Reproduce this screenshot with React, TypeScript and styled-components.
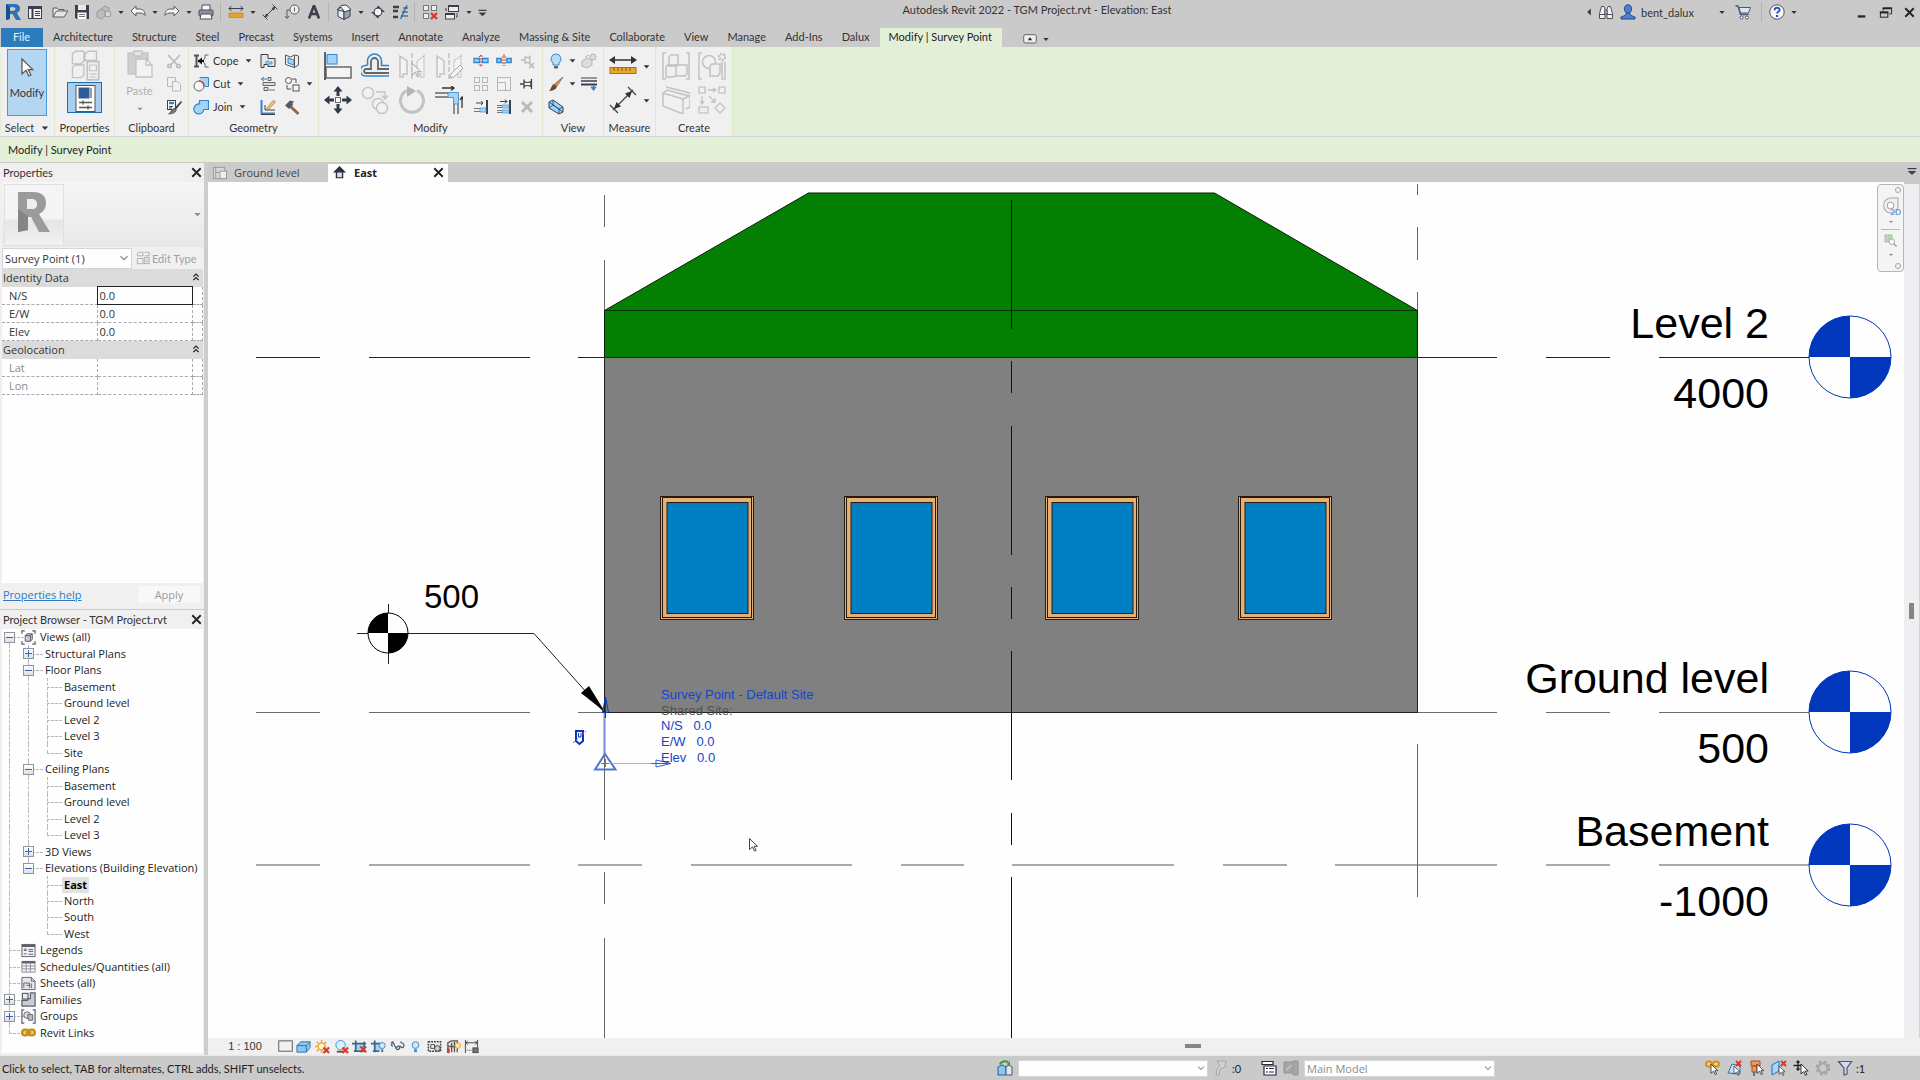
import React from "react";
import styled, { createGlobalStyle, css } from "styled-components";

const UI = '"Lato", "Open Sans", "Noto Sans", sans-serif';
const LIST = '"Open Sans", "Noto Sans", sans-serif';
const DRAW = '"Liberation Sans", Arial, sans-serif';
const INK = "#3b3f4c";
const DIM = "#c2c2c2";
const BLUE = "#2f86cf";
const SKY = "#a3d3f5";
const RED = "#d8392b";
const MARK = "#0037bc";

const Global = createGlobalStyle`
  * { box-sizing: border-box; }
  html, body, #root { height: 100%; }
  body { margin: 0; background: #cacaca; font-family: ${UI}; font-size: 11px; color: #333; overflow: hidden; }
  button, input, select { font: inherit; color: inherit; margin: 0; padding: 0; border: 0; background: none; border-radius: 0; }
`;

/* ---------- icons ---------- */

const CURSOR = "M0 0v11l3-2.6 2 4.2 1.6-.8-2-4H8z";

const icons16: Record<string, React.ReactNode> = {
  revit: (
    <>
      <path d="M1 0h8c4.500 0 6 2 6 4.500 0 2.300-1.300 3.700-3.200 4.300L16 16h-5L7.500 10H5v5l-4 1z" fill="#2c72b5" />
      <path d="M5 3.200v3.600h3c1.600 0 2.400-.6 2.400-1.800S9.600 3.200 8 3.200z" fill="#cfcfcf" />
      <path d="M1 0l4 3.200V15l-4 1z" fill="#17528f" />
    </>
  ),
  list: (
    <g fill="none" stroke={INK}>
      <rect x="1.500" y="2.500" width="13" height="12" fill="#f2f2f2" />
      <path d="M1.500 4h13M5.500 5v9" strokeWidth="2" />
      <path d="M8 7.500h5M8 9.500h5M8 11.500h5" />
    </g>
  ),
  open: (
    <g fill="#e6e6e6" stroke="#5a5e69">
      <path d="M1 13V4h4l1.500 1.500H12V7" />
      <path d="M1 13l3.500-6H16l-4 6z" />
    </g>
  ),
  save: (
    <>
      <path d="M1 1h14v14H2.500L1 13.500z" fill={INK} />
      <path d="M4 1h8v5H4z" fill="#e8e8e8" />
      <path d="M3.500 8.500h9V15h-9z" fill="#fff" />
      <path d="M5 10.500h6M5 12.500h6" stroke="#777" />
    </>
  ),
  sync: (
    <g fill="#bdbdbd" stroke="#999">
      <path d="M5 5l4-3 4 2v5l-4 3-4-2z" />
      <path d="M1 8l4-3 4 2v5l-4 3-4-2z" />
      <circle cx="12" cy="10" r="3" fill="#d5d5d5" />
    </g>
  ),
  undo: <path d="M1 7l5-5v3h3c4 0 6 2 6 6.500-1.500-2-3-2.500-6-2.500H6v3z" fill="#f4f4f4" stroke="#555a66" />,
  redo: <path d="M15 7l-5-5v3H7c-4 0-6 2-6 6.500 1.500-2 3-2.500 6-2.500h3v3z" fill="#f4f4f4" stroke="#555a66" />,
  print: (
    <g stroke="#4a4e5a" fill="#f7f7f7">
      <path d="M4 6V1h8v5" />
      <rect x="1" y="6" width="14" height="6" rx="1" fill="#8d919c" />
      <path d="M3 10h10l1 5H2z" />
    </g>
  ),
  measure: (
    <>
      <path d="M1 4.500h14M3.500 2L1 4.500 3.500 7M12.500 2L15 4.500 12.500 7" stroke={INK} fill="none" />
      <rect x="1" y="9" width="14" height="4.500" fill="#e8a32b" stroke="#b57a15" strokeWidth=".6" />
    </>
  ),
  dim: (
    <g stroke={INK} fill={INK}>
      <path d="M3 13L13 3M.5 10.500l5 5M10.500.5l5 5" />
      <path d="M2.500 13.500l4-1.500L4 9.500zM13.500 2.500l-4 1.500L12 6.500z" stroke="none" />
    </g>
  ),
  tag: (
    <g fill="none" stroke="#565a66">
      <circle cx="10.500" cy="5.500" r="4.500" fill="#f0f0f0" />
      <path d="M10.500 3.500v4M6 6H3v8M1 12l2 2.500L5 12" />
    </g>
  ),
  textA: (
    <path d="M8 1.500L3 14.500M8 1.500l5 13M4.800 10h6.400" stroke={INK} strokeWidth="2.600" fill="none" />
  ),
  house: (
    <g stroke={INK} fill="#e9edf2">
      <path d="M2 6v6.500l6 3v-8z" />
      <path d="M8 7.500v8l6-3V5.500z" fill="#9aa3b2" />
      <path d="M1 6l4-4.500 5-.5 5 4.500-6.500 2.500L5 3z" fill="#f7f7f7" />
    </g>
  ),
  section: (
    <>
      <path d="M8 1.500l7 6.500h-3l-4 6.500L1 8h3z" fill={INK} />
      <circle cx="8" cy="8" r="4" fill="#f2f2f2" stroke={INK} />
    </>
  ),
  thin: (
    <>
      <path d="M1 3h6M1 7h5M1 13h5" stroke={INK} strokeWidth="2.500" />
      <path d="M8.500 15L15 1" stroke={BLUE} strokeWidth="1.600" />
      <path d="M11 4h5M10 8h6M9 12h7" stroke={INK} />
    </>
  ),
  closeHidden: (
    <>
      <g fill="#eee" stroke="#777">
        <rect x="1.500" y="1.500" width="5" height="5" />
        <rect x="9.500" y="1.500" width="5" height="5" />
        <rect x="1.500" y="9.500" width="5" height="5" />
      </g>
      <path d="M9 9l6 6M15 9l-6 6" stroke={RED} strokeWidth="2.400" />
    </>
  ),
  switchWin: (
    <g fill="#eee" stroke={INK}>
      <rect x="4.500" y="1.500" width="10" height="6" />
      <path d="M4 2h11" strokeWidth="2" />
      <rect x="1.500" y="9.500" width="9" height="5.500" />
      <path d="M1 10h10" strokeWidth="2" />
      <path d="M13 9v4h-1M2 7V4" />
    </g>
  ),
  custom: <path d="M3 4.500h10v1.600H3zM3 8h10l-5 4.500z" fill={INK} />,
  caret: <path d="M4.500 6.500h7L8 10.500z" fill="#333" />,
  caretL: <path d="M10 4v8L6 8z" fill="#333" />,
  binoc: (
    <g fill="#f2f2f2" stroke="#4b4f5b">
      <path d="M1.500 14.500v-5l2-7h2.500l1 3v9z" />
      <path d="M14.500 14.500v-5l-2-7H10l-1 3v9z" />
      <path d="M7 6h2v4H7zM1.500 10.500H7M9 10.500h5.500" />
    </g>
  ),
  user: (
    <g fill="#4f7fd0" stroke="#27468c">
      <path d="M8 .8c2.500 0 3.600 1.700 3.600 4S10 9.500 8 9.500 4.400 7 4.400 4.800 5.500.8 8 .8z" />
      <path d="M1 15v-2c2-1 4-1 5-2.500V9h4v1.500C11 12 13 12 15 13v2z" />
    </g>
  ),
  cart: (
    <g fill="none" stroke="#4c5878">
      <path d="M.5 2H3l2.500 8.500h8" strokeWidth="1.400" />
      <path d="M4 3.500h11.500l-2 5.500H5.500z" fill="#dfe4ee" />
      <circle cx="6.500" cy="13.500" r="1.500" fill="#fff" />
      <circle cx="12" cy="13.500" r="1.500" fill="#fff" />
    </g>
  ),
  help: (
    <>
      <circle cx="8" cy="8" r="7.200" fill="#f7f7f7" stroke="#555" />
      <path d="M5.600 6.200C5.600 3 10.600 3 10.600 6c0 1.800-2.500 1.800-2.500 3.600" stroke="#2458c4" strokeWidth="2" fill="none" />
      <path d="M7 11h2.200v2H7z" fill="#2458c4" />
    </>
  ),
  min: <path d="M4 11h8v2.400H4z" fill="#222" />,
  restore: (
    <g fill="none" stroke="#222">
      <path d="M5.500 6V3.500h9v6H12" />
      <path d="M5 3.500h10" strokeWidth="2" />
      <rect x="2.500" y="7.500" width="8" height="5.500" />
      <path d="M2 8h9" strokeWidth="2" />
    </g>
  ),
  close: <path d="M3.500 3.500l9 9M12.500 3.500l-9 9" stroke="#222" strokeWidth="2" />,
  scissors: (
    <g stroke="#b9b9b9" fill="none" strokeWidth="1.600">
      <path d="M2 2l9 9.500M14 2l-9 9.500" />
      <circle cx="3.500" cy="13" r="1.700" />
      <circle cx="12.500" cy="13" r="1.700" />
    </g>
  ),
  copyDoc: (
    <g fill="#f1f1f1" stroke="#b9b9b9">
      <path d="M1.500 1.500h8v9h-8z" />
      <path d="M6.500 5.500h5l3 3v6.500h-8z" />
    </g>
  ),
  matchType: (
    <>
      <rect x="1.500" y="1.500" width="8" height="9" fill="#fff" stroke={INK} />
      <path d="M3 4h5" stroke={BLUE} strokeWidth="2.500" />
      <path d="M3 7.500h4M3 9h3" stroke={INK} />
      <path d="M15 2l1 1-5.500 7L9 8.500z" fill={INK} />
      <path d="M8.500 9l2 2c-1 3-5 4-8 4 2-1 3-5 6-6z" fill="#777" stroke={INK} strokeWidth=".6" />
    </>
  ),
  cope: (
    <>
      <path d="M1 2.500h5M1 13.500h5M3.500 2.500v11" stroke="#555" strokeWidth="2" />
      <path d="M15.500 2H12v3L9.500 8l2.500 3v3h3.500" fill="none" stroke="#666" />
      <path d="M5 8h6" stroke="#111" strokeWidth="2" />
      <path d="M4.500 8L9 4.500v7z" fill="#111" />
    </>
  ),
  cut: (
    <>
      <path d="M6.500 1.500h9v9h-4" fill={SKY} stroke={BLUE} />
      <circle cx="6" cy="10" r="5" fill="#f8f8f8" stroke="#666" />
      <path d="M6 5a5 5 0 0 1 5 5" stroke={RED} fill="none" strokeWidth="1.600" />
    </>
  ),
  join: (
    <path d="M6.500 1.500h9v9h-4.700A5 5 0 1 1 6.500 5z" fill={SKY} stroke={BLUE} strokeWidth="1.200" />
  ),
  wallJoin: (
    <>
      <path d="M1 1.500h7v4h7v8H8v-2H4v3H1z" fill="#e6e6e6" stroke={INK} />
      <path d="M5 9.500l3-2v1.500h4v2H8V12z" fill={SKY} stroke={BLUE} strokeWidth=".7" />
    </>
  ),
  splitFace: (
    <>
      <path d="M1.500 2l5 2 4-2 4 1v9l-4 2.500-9-3z" fill="#eee" stroke="#555" />
      <path d="M4 5l6 2v5l-6-2z" fill={SKY} stroke={BLUE} />
      <path d="M10.500 2.500V15" stroke="#555" />
    </>
  ),
  beamJoin: (
    <>
      <path d="M1 3h6M4 1L1.500 3 4 5M9 14h6" stroke={BLUE} fill="none" />
      <path d="M8 1.500h3v3H8zM3 6.500h12v3H3zM4 11.500h4v3H4z" fill="#ddd" stroke="#666" />
    </>
  ),
  linkJoin: (
    <g fill="#f4f4f4" stroke="#555">
      <circle cx="4.500" cy="4.500" r="3" />
      <rect x="9" y="9" width="6" height="6" />
      <path d="M8 3h4v4M3 9v4h4" fill="none" />
    </g>
  ),
  paintJoin: (
    <>
      <path d="M1.500 1v13.500H15" fill="none" stroke={BLUE} strokeWidth="2" />
      <path d="M5 6v5h10M1 15.500h14" fill="none" stroke={INK} />
      <path d="M7 9l6-7.500 2.500 1.500L9 10l-2.500 1z" fill="#f1c27a" stroke="#a8752b" strokeWidth=".7" />
    </>
  ),
  hammer: (
    <>
      <path d="M7 6.500l8 7.500-1.500 1.500L5.500 8z" fill="#a5683e" stroke="#5f3b22" strokeWidth=".6" />
      <path d="M1 6.500L6 1.500l4 1-1.500 2 .5 1.500-4 4z" fill="#565b66" />
    </>
  ),
  splitEl: (
    <>
      <path d="M1 5.500h5.500v4H1zM9.500 5.500H15v4H9.500z" fill={SKY} stroke={BLUE} strokeWidth="1.300" />
      <path d="M8 2v11M6 4l2-2 2 2M6 11.500l2 2 2-2" stroke={RED} fill="none" strokeDasharray="2 1" />
    </>
  ),
  splitGap: (
    <>
      <path d="M1 5.500h4v4H1zM11 5.500h4v4h-4z" fill={SKY} stroke={BLUE} strokeWidth="1.600" />
      <path d="M7 3v10M9 3v10M8 1v2" stroke={RED} fill="none" strokeDasharray="2 1" />
    </>
  ),
  unpin: (
    <>
      <path d="M2 7h4M6 3v8M6 4.500h5M6 9.500h5M11 2.500v9" stroke="#bbb" fill="none" strokeWidth="1.300" />
      <path d="M10 10l5 5M15 10l-5 5" stroke="#bbb" strokeWidth="1.600" />
    </>
  ),
  array: (
    <g fill="#f2f2f2" stroke="#b5b5b5">
      <rect x="1.500" y="1.500" width="5" height="5" />
      <rect x="9.500" y="1.500" width="5" height="5" />
      <rect x="1.500" y="9.500" width="5" height="5" />
      <rect x="9.500" y="9.500" width="5" height="5" />
    </g>
  ),
  scale: (
    <g fill="#f2f2f2" stroke="#b5b5b5">
      <rect x="1.500" y="1.500" width="13" height="13" />
      <rect x="1.500" y="6.500" width="8" height="8" />
    </g>
  ),
  pin: (
    <path d="M1 8h4M5 3.500v9M5 5.500c3 1.500 4 1.500 7 0v5c-3-1.500-4-1.500-7 0M12.500 3v10" stroke="#444" fill="none" strokeWidth="1.300" />
  ),
  trim1: (
    <>
      <path d="M14 1v14" stroke={INK} strokeWidth="2" />
      <path d="M3 4h7M8 2l2 2-2 2" stroke={INK} fill="none" />
      <path d="M1 9.500h6M1 12.500h6" stroke="#777" />
      <path d="M7 9h6v4H7z" fill={SKY} stroke={BLUE} strokeWidth=".6" />
    </>
  ),
  trim2: (
    <>
      <path d="M14 1v14" stroke={INK} strokeWidth="2" />
      <path d="M4 2.500h7M9 .5l2 2-2 2" stroke={INK} fill="none" />
      <path d="M1 6.500h5M1 8.500h5M1 11.500h5M1 13.500h5" stroke="#777" />
      <path d="M6 6h7v3H6zM6 11h7v3H6z" fill={SKY} stroke={BLUE} strokeWidth=".6" />
    </>
  ),
  del: <path d="M3 3l10 10M13 3L3 13" stroke="#b9b9b9" strokeWidth="3" />,
  bulb: (
    <>
      <path d="M8 1a5 5 0 0 1 3 9v2H5v-2a5 5 0 0 1 3-9z" fill="#b9dcf7" stroke="#3c87c9" />
      <path d="M6 13h4v2.500H6z" fill="#666" />
    </>
  ),
  displace: (
    <g fill="#ddd" stroke="#b5b5b5">
      <path d="M1 8l5-3 5 2v5l-5 3-5-2z" />
      <circle cx="12" cy="4" r="3" />
      <path d="M4 4l4-2" />
    </g>
  ),
  brush: (
    <>
      <path d="M15 1L9 10 6.500 8z" fill="#e0964a" stroke="#8d5522" strokeWidth=".7" />
      <path d="M6 8l3 2.500C8 14 4 15 1 15c2-1 2-6 5-7z" fill="#704b33" />
    </>
  ),
  lineWork: (
    <>
      <path d="M0 2h16" stroke={INK} />
      <path d="M0 5h16" stroke={INK} strokeWidth="1.500" />
      <path d="M0 8.500h16" stroke={INK} strokeWidth="2" />
      <path d="M12.500 9v3M10 11h5l-2.500 3.500z" fill={BLUE} stroke={BLUE} />
    </>
  ),
  box3d: (
    <>
      <path d="M1 3l4-2 10 7v5l-4 2L1 9z" fill={SKY} stroke={INK} />
      <path d="M5 1v5l10 7M5 6L1 9M1 3l10 7v5M11 10l4-2" fill="none" stroke="#1d5f9a" />
    </>
  ),
  docTab: (
    <g fill="#d9d9d9" stroke="#999">
      <rect x="1.500" y="2.500" width="12" height="12" />
      <path d="M4 2.500v12M4 8h4" />
      <rect x="8.500" y="6.500" width="7" height="8" fill="#eee" />
    </g>
  ),
  elevTab: (
    <>
      <path d="M8 1l7 7h-3v6H4V8H1z" fill="#2b3040" />
      <path d="M5.500 8h5v5h-5z" fill="#d5e0ee" />
    </>
  ),
  editType: (
    <g fill="none" stroke="#a9a9a9">
      <path d="M3 1.500h5v4H1.500V3zM10 1.500h5v4h-5M1.500 8.500H8v6H1.500z" />
      <rect x="9.500" y="7.500" width="5.500" height="7" />
      <path d="M11 10h3M11 12h3" />
    </g>
  ),
  views: (
    <g fill="none" stroke="#555a66">
      <path d="M4 1H1v3M12 1h3v3M4 15H1v-3M12 15h3v-3" strokeWidth="1.300" />
      <path d="M4.500 6l2-2h5.500v6l-2 2H4.500z" fill="#c9ccd3" />
      <path d="M4.500 6H10v6M10 6l2-2" />
    </g>
  ),
  legends: (
    <g stroke="#5c606b" fill="#f2f2f2">
      <rect x="1" y="1.500" width="14" height="13" />
      <path d="M1 3h14" strokeWidth="2.500" />
      <path d="M3 6.500h3M3 8h3M3 11.500h3M8 7h5M8 9h5M8 12h5" />
    </g>
  ),
  schedules: (
    <g stroke="#8a8e98" fill="#f8f8f8">
      <rect x="1" y="2.500" width="14" height="11.500" />
      <path d="M1 3.500h14" stroke="#5c606b" strokeWidth="2.500" />
      <path d="M1 7.500h14M1 10.500h14M5.500 4v10M10 4v10" />
    </g>
  ),
  sheets: (
    <g stroke="#5c606b" fill="#e4e6ea">
      <path d="M1 1.500h10l4 4V14.500H1z" />
      <path d="M3 12.500v-5h6v5M6 10h3M11 1.500v4h4" fill="none" />
      <path d="M11 8v5" />
    </g>
  ),
  families: (
    <g stroke="#5c606b" strokeWidth="1.300" fill="#eceef1">
      <path d="M1 9h6v-2h3V1h5v14H1z" fill="#c8ccd4" />
      <rect x="1.500" y="1.500" width="6" height="6" />
    </g>
  ),
  groups: (
    <g stroke="#5c606b" fill="none">
      <path d="M3.500 1H1v14h2.500M12.500 1H15v14h-2.500" strokeWidth="1.300" />
      <circle cx="6.500" cy="6.500" r="3.500" fill="#dfe1e6" />
      <path d="M7 6h5.500v6H8z" fill="#b9bdc6" />
    </g>
  ),
  links: (
    <g fill="#f3cf7c" stroke="#c98d1a" strokeWidth="2.400">
      <rect x="1.200" y="5" width="7" height="6" rx="3" />
      <rect x="7.800" y="5" width="7" height="6" rx="3" />
      <path d="M5 8h6" />
    </g>
  ),
  detail: <rect x=".8" y="2" width="14.400" height="11" fill="#f1f1f1" stroke="#555" />,
  visual: (
    <g fill="#8cc7f2" stroke="#2a70b4">
      <path d="M1 7l4-4h10v6l-4 5H1z" />
      <path d="M1 7h10v7M11 7l4-4" fill="none" />
    </g>
  ),
  sunOff: (
    <>
      <circle cx="7" cy="8" r="3.800" fill="#fff3cf" stroke="#e09c22" strokeWidth="1.400" />
      <path d="M7 1v2M7 13v2M0 8h2M2 3l1.500 1.500M12 3l-1.500 1.500M2 13l1.500-1.500" stroke="#e09c22" strokeWidth="1.400" />
      <path d="M9 9l6 6M15 9l-6 6" stroke={RED} strokeWidth="2.400" />
    </>
  ),
  shadowOff: (
    <>
      <circle cx="7" cy="6.500" r="5" fill="#dceffc" stroke="#4a90cc" />
      <path d="M3 13.500h7" stroke="#555" strokeWidth="2" />
      <path d="M9 9l6 6M15 9l-6 6" stroke={RED} strokeWidth="2.400" />
    </>
  ),
  cropOff: (
    <>
      <path d="M3 4h10v8H3z" fill={SKY} />
      <path d="M4 1.500V13.500M0 5h15M2 13h11V3" fill="none" stroke="#3a6690" strokeWidth="1.800" />
      <path d="M9 8l6 6M15 8l-6 6" stroke={RED} strokeWidth="2.400" />
    </>
  ),
  cropShow: (
    <>
      <path d="M3 4h8v8H3z" fill={SKY} />
      <path d="M4 1.500V14M0 5h12M2 13h7" fill="none" stroke="#3a6690" strokeWidth="1.800" />
      <circle cx="12" cy="7" r="3.200" fill="#cfe8fb" stroke="#3c87c9" />
      <path d="M12 11v3" stroke="#666" strokeWidth="2" />
    </>
  ),
  glasses: (
    <g fill="none" stroke="#4a5f73" strokeWidth="1.300">
      <path d="M1 4l2-1 4 8c2 1 4-1 3-3-1-1-3 0-3 2M9 8c2-1 3 0 3 1 2 1 4-2 2-4l-3-2M3 5c-2 0-2 2 0 3" />
    </g>
  ),
  reveal: (
    <>
      <circle cx="8" cy="6.500" r="3.600" fill="#cfe8fb" stroke="#3c87c9" />
      <path d="M6.500 11h3v3h-3z" fill="#3c87c9" />
    </>
  ),
  tempView: (
    <g fill="none" stroke="#444">
      <rect x="1.500" y="3" width="13" height="10" strokeDasharray="2 1" strokeWidth="1.600" />
      <circle cx="11" cy="10" r="3" fill="#ccc" />
      <path d="M4 6h4v4H4z" />
    </g>
  ),
  analytic: (
    <>
      <path d="M2 14V4l4-2h6v12M2 8h10M6 4v10M9 3v11" fill="none" stroke="#555" strokeWidth="1.400" />
      <path d="M1 10h3v5H1z" fill={RED} />
      <circle cx="12.500" cy="7" r="3" fill="#ffe2a6" stroke="#e09c22" />
    </>
  ),
  constraint: (
    <g fill="none" stroke="#444">
      <path d="M1.500 1v14M14.500 1v8M1.500 4h13M4 2L2 4l2 2M12 2l2 2-2 2" />
      <path d="M3 12h5" strokeDasharray="1 1" />
      <rect x="9.500" y="9.500" width="5.500" height="5" fill="#777" />
    </g>
  ),
  worksets: (
    <>
      <path d="M1 7l4-2 4 2v8H1z" fill="#8cc7f2" stroke="#2a5f94" />
      <path d="M9 15V7l3-2 3 2v8z" fill="#dfe6ee" stroke="#3b5a7a" />
      <path d="M3 4.500C4 1 9 .5 11 2.500" stroke="#3f9a3a" strokeWidth="2" fill="none" />
      <path d="M9.500 4.500L13 5V1z" fill="#3f9a3a" />
    </>
  ),
  editable: <path d="M4 1h9l-1 6-5 2-1 6H3l1-6 3-3z" fill="#d3d3d3" stroke="#a5a5a5" />,
  options: (
    <g stroke="#23283f" fill="#fff">
      <path d="M1 1.500h11v3H1zM3 6h12v9H3z" strokeWidth="1.200" />
      <path d="M5 8.500h2M8 8.500h5M5 12h2M8 12h5" />
    </g>
  ),
  optionAdd: (
    <g fill="#a6a6a6" stroke="#949494">
      <path d="M1 2h8v11H1zM10 1h5v14h-5z" />
      <path d="M3 10l6-5" stroke="#ddd" />
    </g>
  ),
  selLinks: (
    <>
      <g fill="#f3cf7c" stroke="#d09420" strokeWidth="2">
        <rect x="1" y="1.500" width="6" height="5" rx="2.500" />
        <rect x="8" y="1.500" width="6" height="5" rx="2.500" />
      </g>
      <path d={CURSOR} transform="translate(6 4) scale(.85)" fill="#fff" stroke="#333" />
    </>
  ),
  selUnder: (
    <>
      <path d="M1 13L5 4l8 2v8z" fill="#bfe0f6" stroke="#2a70b4" />
      <path d="M9 1l5 5M14 1L9 6" stroke={RED} strokeWidth="2" />
      <path d={CURSOR} transform="translate(7 6) scale(.75)" fill="#fff" stroke="#333" />
    </>
  ),
  selPinned: (
    <>
      <path d="M2 1h9v5H2zM3 6v6h5V6z" fill="#ea9a5a" stroke="#b0521c" />
      <path d="M5 12v4" stroke="#555" strokeWidth="1.500" />
      <path d={CURSOR} transform="translate(8 4) scale(.85)" fill="#fff" stroke="#333" />
    </>
  ),
  selFace: (
    <>
      <path d="M1 5l7-4v10l-7 4z" fill="#a9d6f6" stroke="#2a70b4" />
      <path d="M10 1l5 5M15 1l-5 5" stroke={RED} strokeWidth="2" />
      <path d={CURSOR} transform="translate(8 6) scale(.75)" fill="#fff" stroke="#333" />
    </>
  ),
  drag: (
    <>
      <path d="M5 1v9M.5 5.500h9M3.500 2.500L5 1l1.500 1.500M3.500 8.500L5 10l1.500-1.500" stroke="#222" fill="none" strokeWidth="1.300" />
      <path d={CURSOR} transform="translate(8 4) scale(.9)" fill="#fff" stroke="#222" />
    </>
  ),
  gear: (
    <>
      <circle cx="8" cy="8" r="6.400" fill="none" stroke="#a4a4a4" strokeWidth="2" strokeDasharray="3 2" />
      <circle cx="8" cy="8" r="4.500" fill="none" stroke="#a4a4a4" strokeWidth="2" />
    </>
  ),
  filter: <path d="M1.500 1.500h13L10 8v6l-3 1V8z" fill="#d5dbe6" stroke="#4a5878" strokeWidth="1.200" />,
  wheel: (
    <>
      <path d="M15 1v9a6.500 6.500 0 0 1-6.500 5A7 7 0 0 1 8.500 1z" fill="#f0f0f3" stroke="#a6a8b2" />
      <circle cx="8" cy="8" r="3" fill="#fff" stroke="#a6a8b2" />
    </>
  ),
  zoomRegion: (
    <>
      <rect x="1" y="1" width="9" height="9" fill="#b8d8b2" stroke="#7fa37b" strokeDasharray="1 1" />
      <circle cx="9.500" cy="9.500" r="3.500" fill="#f4f4f4" stroke="#9a9ca6" />
      <path d="M12 12l3.500 3.500" stroke="#9a9ca6" strokeWidth="1.600" />
    </>
  ),
  panelMode: (
    <>
      <rect x=".8" y="3" width="14.400" height="9.500" rx="2" fill="#eee" stroke="#555" />
      <path d="M5.500 9.500h5L8 6z" fill="#222" />
    </>
  ),
  tri: <path d="M3 5.500h10L8 11z" fill="#333" />,
  triGrey: <path d="M4 6h8l-4 4z" fill="#8a8a8a" />,
  chev: <path d="M4 6l4 4 4-4" fill="none" stroke="#8a8a8a" strokeWidth="1.400" />,
  fold: <path d="M5 6.500L8 3.500l3 3M5 10.500l3-3 3 3" fill="none" stroke="#222" strokeWidth="1.400" />,
};

const icons28: Record<string, React.ReactNode> = {
  arrow: <path d={CURSOR} transform="translate(9 5) scale(1.350)" fill="#fff" stroke="#555" strokeWidth=".9" />,
  typeProps: (
    <g fill="#f0f0f0" stroke={DIM}>
      <path d="M3 4l3-2h7v9l-3 2H3zM14 4l3-2h7v8H14zM3 16l3-2h7v9l-3 2H3z" strokeWidth="1.200" />
      <rect x="16" y="11" width="10" height="16" strokeWidth="1.500" />
      <path d="M18 14h6v5h-6zM18 22h6M18 24.500h6" />
    </g>
  ),
  props: (
    <g stroke="#555">
      <rect x="5" y="1.500" width="19" height="26" fill="#fff" />
      <path d="M7.500 3.500h11v11h-11z" fill="#2f5b96" stroke="none" />
      <path d="M20 4v10" stroke="#999" strokeWidth="2" />
      <path d="M8 18.500h13M8 23.500h13M12 16.500v4M17 21.500v4" strokeWidth="1.300" />
    </g>
  ),
  paste: (
    <g fill="#e4e4e4" stroke="#c2c2c2" strokeWidth="1.300">
      <rect x="2" y="3" width="20" height="21" fill="#cfcfcf" />
      <path d="M8 1h8v5H8z" />
      <path d="M10 9h10l6 6v12H10z" fill="#f2f2f2" />
      <path d="M20 9v6h6" fill="none" />
    </g>
  ),
  align: (
    <>
      <path d="M1 0v28" stroke="#333" strokeWidth="1.500" />
      <rect x="3" y="2.500" width="10" height="9.500" fill={SKY} stroke={BLUE} />
      <rect x="2" y="15" width="25" height="11" fill="#f4f4f4" stroke="#555" strokeWidth="1.300" />
    </>
  ),
  offset: (
    <g fill="none">
      <path d="M28 13.500h-7.500V9a7 7 0 0 0-14 0c0 3 1 4.500-2 4.500a5 5 0 0 0 0 10.500H28" stroke={BLUE} strokeWidth="1.600" />
      <path d="M28 17h-11V9.500a3.500 3.500 0 0 0-7 0V17H5a2 2 0 0 0 0 4h23" stroke="#666" strokeWidth="1.800" />
    </g>
  ),
  mirrorPick: (
    <g fill="#f4f4f4" stroke={DIM} strokeWidth="1.500">
      <path d="M2 4l7 5v13h-4v3H2z" />
      <path d="M26 4l-7 5v13h4v3h3z" strokeDasharray="2 1" />
      <path d="M14 1v26" strokeDasharray="5 2" />
      <path d={CURSOR} transform="translate(14 11) scale(1.100)" stroke="#b5b5b5" strokeWidth="1" />
    </g>
  ),
  mirrorDraw: (
    <g fill="#f4f4f4" stroke={DIM} strokeWidth="1.500">
      <path d="M2 4l7 5v13h-4v3H2z" />
      <path d="M26 4l-7 5v13h4v3h3z" strokeDasharray="2 1" />
      <path d="M14 1v26" strokeDasharray="5 2" />
      <path d="M15 26l1-4 9-9 3 3-9 9z" stroke="#aaa" strokeWidth="1" />
    </g>
  ),
  move: (
    <>
      <path d="M14 0l4.500 5.500h-3V10h-3V5.500h-3zM14 28l4.500-5.500h-3V18h-3v4.500h-3zM0 14l5.500-4.500v3H10v3H5.500v3zM28 14l-5.500-4.500v3H18v3h4.500v3z" fill="#333a4a" />
      <rect x="11.500" y="11.500" width="5" height="5" fill="#fff" stroke="#666" />
    </>
  ),
  copy: (
    <g fill="#f2f2f2" stroke={DIM} strokeWidth="1.400">
      <circle cx="7" cy="7" r="5.500" />
      <circle cx="17" cy="18" r="5.500" />
      <circle cx="21" cy="22" r="5.500" />
      <path d="M15 6h9v6M21 9.500l3 3.500 3-3.500" fill="none" />
    </g>
  ),
  rotate: (
    <>
      <path d="M19 4.500a11.500 11.500 0 1 1-10 0" fill="none" stroke={DIM} strokeWidth="3" />
      <path d="M9 0l9 5-9 6z" fill="#b5b5b5" />
    </>
  ),
  trim: (
    <>
      <path d="M0 7h13M0 11h13M19 18v10M23 18v10" stroke="#666" strokeWidth="1.400" />
      <path d="M13 6.500h10.500V18h-5v-6.500H13z" fill={SKY} stroke={BLUE} strokeWidth=".8" />
      <path d="M7 2h12M16 0l3 2-3 2.500M27 22V11M25 14l2-3 2 3" fill="none" stroke="#333" strokeWidth="1.300" />
    </>
  ),
  ruler: (
    <>
      <path d="M2 8h24" stroke="#333" strokeWidth="1.500" />
      <path d="M0 8l6-4v8zM28 8l-6-4v8z" fill="#333" />
      <rect x="1" y="15.500" width="26" height="6" fill="#e9a92e" stroke="#a8730f" />
      <path d="M5 16v3M9 16v3M13 16v3M17 16v3M21 16v3" stroke="#8a5d0c" />
    </>
  ),
  dimBig: (
    <>
      <path d="M4 24L24 4M1 19l8 8M19 1l8 8" stroke="#444" strokeWidth="1.300" />
      <path d="M5 23l2.500-7 4.500 4.500zM23 5l-7 2.500 4.500 4.500z" fill="#333" />
    </>
  ),
  group: (
    <g fill="#f0f0f0" stroke={DIM} strokeWidth="1.500">
      <path d="M4 1H1v26h3M24 1h3v26h-3" fill="none" />
      <path d="M7 5l2-2h7v9l-2 2H7zM4 15l2-2h8v10l-2 2H4zM14 15l2-2h9v9l-2 2h-9z" />
    </g>
  ),
  assembly: (
    <g fill="#f0f0f0" stroke={DIM} strokeWidth="1.500">
      <path d="M4 1H1v26h3M24 10v17h3V10" fill="none" />
      <circle cx="11" cy="10" r="6.500" />
      <path d="M12 14l2-2h8v9l-2 3h-8z" />
      <circle cx="24" cy="5" r="3" strokeDasharray="2 1" strokeWidth="2.500" />
    </g>
  ),
  parts: (
    <g fill="#f0f0f0" stroke={DIM} strokeWidth="1.500">
      <path d="M4 1l24 6v14l-4 2" />
      <path d="M1 7l20 6v15L1 20zM1 7l4-3 22 6-6 3" />
    </g>
  ),
  similar: (
    <g fill="#f0f0f0" stroke={DIM} strokeWidth="1.300">
      <rect x="1" y="1" width="6" height="6" />
      <rect x="21" y="1" width="6" height="6" />
      <rect x="1" y="21" width="9" height="6" />
      <path d="M22 17l5 5-5 5-5-5zM10 4h8M15 2l3 2-3 2M4 10v8M2 15l2 3 2-3M11 10l6 6M17 12v4h-4" />
    </g>
  ),
};

const Svg = styled.svg`
  display: block;
  flex: none;
`;

const Ico = ({ n, s = 16 }: { n: string; s?: number }) => (
  <Svg width={s} height={s} viewBox="0 0 16 16" aria-hidden="true">
    {icons16[n]}
  </Svg>
);
const Big = ({ n, s = 28 }: { n: string; s?: number }) => (
  <Svg width={s} height={s} viewBox="0 0 28 28" aria-hidden="true">
    {icons28[n]}
  </Svg>
);

/* ---------- frame ---------- */

const Shell = styled.div`
  min-height: 100vh;
  height: 100%;
  display: flex;
  flex-direction: column;
`;

const TitleBar = styled.header`
  height: 28px;
  padding-bottom: 4px;
  display: flex;
  align-items: center;
  background: #cacaca;
`;

const ToolRow = styled.div`
  display: flex;
  align-items: center;
  padding-left: 2px;
`;

const Slot = styled.button<{ $w?: number }>`
  width: ${(p) => p.$w ?? 22}px;
  height: 22px;
  display: flex;
  align-items: center;
  justify-content: center;
  flex: none;
`;

const Sep = styled.span`
  flex: none;
  width: 1px;
  height: 20px;
  margin: 0 4px 0 3px;
  background: #b4b4b4;
`;

const Gap = styled.span<{ $w: number }>`
  flex: none;
  width: ${(p) => p.$w}px;
`;

const Title = styled.h1`
  flex: 1;
  margin: 0;
  padding: 0 0 4px 4px;
  font-size: 11px;
  font-weight: 400;
  line-height: 16px;
  text-align: center;
  color: #333;
`;

const UserName = styled.button`
  width: 75px;
  text-align: left;
  font-size: 11px;
  color: #333;
`;

const TabRow = styled.nav`
  height: 19px;
  display: flex;
  padding-left: 1px;
`;

const RibbonTab = styled.button<{ $kind?: "file" | "active" }>`
  height: 19px;
  padding: 0 10px 2px 9px;
  font-size: 11px;
  line-height: 16px;
  color: #333;
  white-space: nowrap;
  ${(p) =>
    p.$kind === "file" &&
    css`
      width: 42px;
      margin-right: 1px;
      background: #2b7cba;
      color: #e6f2fb;
    `}
  ${(p) =>
    p.$kind === "active" &&
    css`
      background: #e4efd8;
      color: #222;
    `}
`;

const Ribbon = styled.section`
  height: 90px;
  display: flex;
  padding-left: 1px;
  background: #e4efd8;
  border-bottom: 1px solid #d3d6d3;
`;

const Panel = styled.div<{ $w: number }>`
  flex: none;
  width: ${(p) => p.$w}px;
  display: flex;
  flex-direction: column;
  background: #f0f0f0;
  border-right: 1px solid #dceccb;
`;

const PanelBody = styled.div<{ $pad?: number }>`
  height: 72px;
  padding: 2px 0 0 ${(p) => p.$pad ?? 2}px;
  display: flex;
`;

const PanelName = styled.div`
  height: 17px;
  display: flex;
  align-items: center;
  justify-content: center;
  gap: 6px;
  font-size: 11px;
  line-height: 16px;
  color: #333;
`;

const BigGrid = styled.div<{ $cols: number; $cell: number }>`
  display: grid;
  grid-template-columns: repeat(${(p) => p.$cols}, ${(p) => p.$cell}px);
  grid-template-rows: 34px 34px;
`;

const SmallGrid = styled.div<{ $cols: string }>`
  display: grid;
  grid-template-columns: ${(p) => p.$cols};
  grid-template-rows: repeat(3, 23px);
`;

const Cell = styled.button`
  display: flex;
  align-items: center;
  justify-content: center;
  gap: 4px;
`;

const TextCell = styled(Cell)`
  justify-content: flex-start;
  font-size: 11px;
  color: #333;
`;

const ModifyButton = styled.button`
  width: 40px;
  height: 67px;
  padding-bottom: 12px;
  display: flex;
  flex-direction: column;
  align-items: center;
  justify-content: center;
  gap: 4px;
  border: 1px solid #4b9ad6;
  background: #b5d6f1;
  font-size: 11px;
`;

const Pressed = styled.button`
  width: 35px;
  height: 31px;
  margin: 1px auto 0;
  display: flex;
  align-items: center;
  justify-content: center;
  border: 1px solid #1f6db0;
  background: #a8cff0;
`;

const Stack = styled.div`
  flex: 1;
  display: flex;
  flex-direction: column;
`;

const PasteButton = styled.button`
  width: 45px;
  display: flex;
  flex-direction: column;
  align-items: center;
  padding-top: 1px;
  color: #b0b0b0;
  font-size: 11px;
  line-height: 26px;
`;

const OptionsBar = styled.div`
  height: 25px;
  padding-left: 8px;
  background: #e4efd8;
  font-family: ${UI};
  font-size: 11px;
  line-height: 26px;
  color: #222;
`;

const Body = styled.div`
  flex: 1;
  min-height: 0;
  display: flex;
`;

/* ---------- left column ---------- */

const Side = styled.aside`
  flex: none;
  width: 208px;
  border-right: 4px solid #cdcdd0;
  border-top: 1px solid #cacaca;
  display: flex;
  flex-direction: column;
  background: #f0f0f0;
`;

const SideHead = styled.div`
  height: 19px;
  padding: 0 0 0 3px;
  display: flex;
  align-items: center;
  justify-content: space-between;
  font-size: 11px;
  color: #333;
`;

const TypePicker = styled.button`
  height: 65px;
  margin: 0 0 0 2px;
  padding-left: 2px;
  display: flex;
  align-items: center;
  justify-content: space-between;
  background: linear-gradient(#f6f6f6, #e8e8ea);
`;

const Thumb = styled.span`
  width: 60px;
  height: 62px;
  padding-bottom: 6px;
  display: flex;
  align-items: center;
  justify-content: center;
  border: 1px solid #e0e0e0;
  background: linear-gradient(#f4f4f4 55%, #e6e6e6 60%, #f2f2f2);
`;

const InstanceRow = styled.div`
  height: 22px;
  padding-left: 2px;
  display: flex;
  align-items: center;
  gap: 4px;
  font-family: ${LIST};
`;

const Combo = styled.label<{ $w: number; $h: number }>`
  width: ${(p) => p.$w}px;
  height: ${(p) => p.$h}px;
  display: flex;
  align-items: center;
  background: #fefefe;
  border: 1px solid #d5d5d5;
  select {
    appearance: none;
    flex: 1;
    min-width: 0;
    height: 100%;
    padding-left: 2px;
    outline: 0;
    font-family: ${LIST};
    font-size: 11px;
  }
`;

const EditType = styled.button`
  display: flex;
  align-items: center;
  gap: 2px;
  font-family: ${UI};
  font-size: 11px;
  color: #a0a0a0;
  white-space: nowrap;
`;

const PropArea = styled.div`
  height: 314px;
  background: #fefefe;
  margin: 0 1px 0 2px;
`;

const PropTable = styled.table`
  width: 100%;
  border-collapse: separate;
  border-spacing: 0;
  table-layout: fixed;
  font-family: ${LIST};
  font-size: 11px;
  line-height: 16px;
  th,
  td {
    padding: 0;
    height: 18px;
    text-align: left;
    font-weight: 400;
  }
`;

const NameCol = styled.col`
  width: 48%;
`;

const EndCol = styled.col`
  width: 5%;
`;

const GroupHead = styled.th`
  background: #dbdbdb;
  button {
    width: 100%;
    height: 18px;
    padding-left: 1px;
    display: flex;
    align-items: center;
    justify-content: space-between;
  }
`;

const PropName = styled.th<{ $off?: boolean }>`
  border-bottom: 1px dashed #a9a9ae;
  border-right: 1px dashed #a9a9ae;
  color: ${(p) => (p.$off ? "#8c8c8c" : "#333")};
  label {
    display: block;
    padding-left: 7px;
  }
`;

const PropCell = styled.td<{ $focus?: boolean }>`
  border-bottom: 1px dashed #a9a9ae;
  border-right: 1px dashed #a9a9ae;
  input {
    display: block;
    width: 100%;
    height: 17px;
    padding-left: 1px;
    outline: ${(p) => (p.$focus ? "1px solid #222" : "0")};
  }
`;

const SideFoot = styled.div`
  height: 27px;
  padding: 0 4px 4px 3px;
  display: flex;
  align-items: center;
  justify-content: space-between;
  border-bottom: 1px solid #cacaca;
  font-family: ${LIST};
  a {
    font-size: 11px;
    color: #2a7ac6;
  }
`;

const Apply = styled.button`
  width: 62px;
  height: 17px;
  background: #f8f8f8;
  font-size: 11px;
  color: #9a9a9a;
`;

const Tree = styled.ul`
  flex: 1;
  min-height: 0;
  margin: 0 1px 2px 0;
  padding: 0 0 12px;
  list-style: none;
  display: flex;
  flex-direction: column;
  background: #fefefe;
  box-shadow: inset 2px 0 #f0f0f0;
  font-family: ${LIST};
`;

const TreeRow = styled.li`
  flex: 1;
  min-height: 0;
  display: flex;
  align-items: center;
  font-size: 11px;
  line-height: 16px;
  color: #222;
`;

const Guide = styled.span<{ $v?: string; $h?: boolean }>`
  position: relative;
  flex: none;
  align-self: stretch;
  width: 19px;
  display: flex;
  align-items: center;
  justify-content: center;
  &::before {
    content: "";
    position: absolute;
    left: 9px;
    top: ${(p) => (p.$v === "start" ? "50%" : "0")};
    bottom: ${(p) => (p.$v === "end" ? "50%" : "0")};
    border-left: ${(p) => (p.$v ? "1px dashed #b8b8c0" : "0")};
  }
  &::after {
    content: "";
    position: absolute;
    left: 9px;
    right: -5px;
    top: 50%;
    border-top: ${(p) => (p.$h ? "1px dashed #b8b8c0" : "0")};
  }
`;

const Toggle = styled.button`
  position: relative;
  z-index: 1;
  width: 11px;
  height: 11px;
  border: 1px solid #8f949e;
  background: linear-gradient(#fff, #dcdfe4);
`;

const TreeText = styled.span<{ $indent: number; $current?: boolean }>`
  margin-left: ${(p) => p.$indent}px;
  padding: 0 2px;
  white-space: nowrap;
  ${(p) =>
    p.$current &&
    css`
      background: #e2e2e2;
      font-weight: 700;
      color: #000;
    `}
`;

const TreeIcon = styled.span`
  position: relative;
  z-index: 1;
  width: 19px;
  display: flex;
  justify-content: center;
`;

/* ---------- drawing area ---------- */

const Main = styled.main`
  flex: 1;
  min-width: 0;
  display: flex;
  flex-direction: column;
`;

const DocTabs = styled.div`
  height: 20px;
  padding: 2px 1px 0 0;
  display: flex;
  background: #cacaca;
`;

const DocTab = styled.button<{ $on?: boolean }>`
  width: 120px;
  padding: 0 2px 2px 4px;
  display: flex;
  align-items: center;
  gap: 7px;
  font-family: ${LIST};
  font-size: 11px;
  color: #444;
  ${(p) =>
    p.$on &&
    css`
      background: #fefefe;
      font-weight: 700;
      color: #222;
    `}
  span {
    flex: 1;
    text-align: left;
  }
`;

const Spacer = styled.span`
  flex: 1;
`;

const ViewRow = styled.div`
  flex: 1;
  min-height: 0;
  display: flex;
`;

const Canvas = styled.div`
  position: relative;
  flex: 1;
  min-width: 0;
  background: #fefefe;
`;

const Drawing = styled.svg`
  display: block;
  width: 100%;
  height: 100%;
  font-family: ${DRAW};
`;

const NavBar = styled.div`
  position: absolute;
  top: 2px;
  right: 0;
  width: 27px;
  height: 88px;
  padding: 2px;
  display: flex;
  flex-direction: column;
  align-items: center;
  justify-content: space-between;
  border: 1px solid #b4b4ba;
  border-radius: 4px;
  background: #f4f4f4;
  hr {
    width: 19px;
    margin: 0;
    border: 0;
    border-top: 1px solid #b9b9bd;
  }
`;

const Dot = styled.button`
  align-self: flex-end;
  width: 6px;
  height: 6px;
  border: 1px solid #a2a2a8;
  border-radius: 3px;
`;

const NavButton = styled.button`
  position: relative;
  display: flex;
  b {
    position: absolute;
    right: -2px;
    bottom: -2px;
    font-size: 8px;
    line-height: 8px;
    color: #6d94d4;
  }
`;

const VScroll = styled.div`
  flex: none;
  width: 16px;
  margin-top: 2px;
  display: flex;
  justify-content: center;
  background: #efeff1;
  border-right: 1px solid #d5d5d8;
`;

const VThumb = styled.div`
  width: 5px;
  height: 16px;
  margin-top: 419px;
  background: #858585;
`;

const ViewBar = styled.div`
  height: 17px;
  padding-bottom: 1px;
  display: flex;
  align-items: center;
  background: #f0f0f0;
`;

const ScaleButton = styled.button`
  width: 68px;
  padding-left: 6px;
  font-family: ${DRAW};
  font-size: 11px;
  color: #333;
`;

const ViewTools = styled.div`
  width: 205px;
  height: 16px;
  display: flex;
  button {
    flex: 1;
    display: flex;
    align-items: center;
    justify-content: center;
  }
`;

const HScroll = styled.div`
  flex: 1;
  margin-right: 16px;
  display: flex;
  align-items: center;
  justify-content: center;
`;

const HThumb = styled.div`
  width: 16px;
  height: 4px;
  background: #858585;
`;

const StatusBar = styled.footer`
  height: 25px;
  padding-left: 2px;
  border-top: 1px solid #e8e8e8;
  display: flex;
  align-items: center;
  background: #cacaca;
  font-size: 11px;
  color: #222;
`;

const Hint = styled.span`
  flex: 1;
  white-space: nowrap;
`;

const Count = styled.span<{ $w: number }>`
  width: ${(p) => p.$w}px;
  font-size: 11px;
`;

const Muted = styled.span`
  display: contents;
  color: #8c8c8c;
`;

/* ---------- data ---------- */

const tabs = [
  "Architecture", "Structure", "Steel", "Precast", "Systems", "Insert", "Annotate", "Analyze",
  "Massing & Site", "Collaborate", "View", "Manage", "Add-Ins", "Dalux",
];

type Node = {
  level: 0 | 1 | 2;
  text: string;
  icon?: string;
  toggle?: "+" | "-";
  first?: boolean;
  last?: boolean;
  parentLast?: boolean;
  current?: boolean;
};

const tree: Node[] = [
  { level: 0, text: "Views (all)", icon: "views", toggle: "-", first: true },
  { level: 1, text: "Structural Plans", toggle: "+" },
  { level: 1, text: "Floor Plans", toggle: "-" },
  { level: 2, text: "Basement" },
  { level: 2, text: "Ground level" },
  { level: 2, text: "Level 2" },
  { level: 2, text: "Level 3" },
  { level: 2, text: "Site", last: true },
  { level: 1, text: "Ceiling Plans", toggle: "-" },
  { level: 2, text: "Basement" },
  { level: 2, text: "Ground level" },
  { level: 2, text: "Level 2" },
  { level: 2, text: "Level 3", last: true },
  { level: 1, text: "3D Views", toggle: "+" },
  { level: 1, text: "Elevations (Building Elevation)", toggle: "-", last: true },
  { level: 2, text: "East", current: true, parentLast: true },
  { level: 2, text: "North", parentLast: true },
  { level: 2, text: "South", parentLast: true },
  { level: 2, text: "West", last: true, parentLast: true },
  { level: 0, text: "Legends", icon: "legends" },
  { level: 0, text: "Schedules/Quantities (all)", icon: "schedules" },
  { level: 0, text: "Sheets (all)", icon: "sheets" },
  { level: 0, text: "Families", icon: "families", toggle: "+" },
  { level: 0, text: "Groups", icon: "groups", toggle: "+" },
  { level: 0, text: "Revit Links", icon: "links", last: true },
];

const Expander = ({ node }: { node: Node }) =>
  node.toggle ? (
    <Toggle aria-label={`Toggle ${node.text}`}>
      <Svg width="9" height="9" viewBox="0 0 9 9">
        <path d={node.toggle === "+" ? "M1 4.500h7M4.500 1v7" : "M1 4.500h7"} stroke="#3b62b0" />
      </Svg>
    </Toggle>
  ) : null;

const edge = (n: Node) => (n.first ? "start" : n.last ? "end" : "full");

const TreeItem = ({ node }: { node: Node }) => (
  <TreeRow>
    {node.level === 0 && (
      <>
        <Guide $v={edge(node)} $h>
          <Expander node={node} />
        </Guide>
        <TreeIcon>
          <Ico n={node.icon!} s={15} />
        </TreeIcon>
        <TreeText $indent={0}>{node.text}</TreeText>
      </>
    )}
    {node.level === 1 && (
      <>
        <Guide $v="full" />
        <Guide $v={edge(node)} $h>
          <Expander node={node} />
        </Guide>
        <TreeText $indent={5}>{node.text}</TreeText>
      </>
    )}
    {node.level === 2 && (
      <>
        <Guide $v="full" />
        <Guide $v={node.parentLast ? undefined : "full"} />
        <Guide $v={edge(node)} $h />
        <TreeText $indent={5} $current={node.current}>
          {node.text}
        </TreeText>
      </>
    )}
  </TreeRow>
);

const PropRow = ({ name, value, focus, off }: { name: string; value: string; focus?: boolean; off?: boolean }) => (
  <tr>
    <PropName scope="row" $off={off}>
      <label htmlFor={`prop-${name}`}>{name}</label>
    </PropName>
    <PropCell $focus={focus}>
      <input id={`prop-${name}`} defaultValue={value} disabled={off} />
    </PropCell>
    <PropCell />
  </tr>
);

const PropGroup = ({ name }: { name: string }) => (
  <tr>
    <GroupHead colSpan={3}>
      <button>
        {name}
        <Ico n="fold" s={14} />
      </button>
    </GroupHead>
  </tr>
);

/* ---------- elevation ---------- */

const dashes: [number, number][] = [
  [256, 320], [369, 530], [578, 642], [691, 852], [901, 964], [1012, 1174],
  [1223, 1287], [1335, 1497], [1546, 1610], [1659, 1809],
];
const sideDashes: [number, number][] = [
  [256, 320], [369, 530], [578, 605], [1417, 1497], [1546, 1610], [1659, 1809],
];

const HLine = ({ y, spans, color }: { y: number; spans: [number, number][]; color: string }) => (
  <path d={spans.map(([a, b]) => `M${a} ${y}H${b}`).join("")} stroke={color} />
);
const VLine = ({ x, spans, color }: { x: number; spans: [number, number][]; color: string }) => (
  <path d={spans.map(([a, b]) => `M${x} ${a}V${b}`).join("")} stroke={color} />
);

const Target = ({ x, y, r, color }: { x: number; y: number; r: number; color: string }) => (
  <g transform={`translate(${x} ${y})`}>
    <circle r={r} fill="#fefefe" stroke={color} />
    <path d={`M0 0H${-r}A${r} ${r} 0 0 1 0 ${-r}ZM0 0H${r}A${r} ${r} 0 0 1 0 ${r}Z`} fill={color} />
  </g>
);

const LevelHead = ({ y, name, value }: { y: number; name: string; value: string }) => (
  <>
    <Target x={1850} y={y} r={41} color={MARK} />
    <text x={1769} y={y - 19} fontSize={43} textAnchor="end">{name}</text>
    <text x={1769} y={y + 51} fontSize={43} textAnchor="end">{value}</text>
  </>
);

const WindowUnit = ({ x }: { x: number }) => (
  <g transform={`translate(${x} 496)`} stroke="#2a1a0c">
    <rect x=".5" y=".5" width="93" height="123" fill="#e4b079" />
    <rect x="2.500" y="1.500" width="89" height="120" fill="#e4b079" />
    <rect x="7" y="6.500" width="81" height="111" fill="#0080c2" />
  </g>
);

const noteLines = ["N/S\u00a0\u00a0\u00a00.0", "E/W\u00a0\u00a0\u00a00.0", "Elev\u00a0\u00a0\u00a00.0"];

const Elevation = () => (
  <Drawing viewBox="208 182 1696 856" preserveAspectRatio="xMidYMid meet" role="img" aria-label="East elevation">
    <g fill="none">
      <HLine y={357.5} spans={sideDashes} color="#222" />
      <HLine y={712.5} spans={sideDashes} color="#6c6c70" />
      <HLine y={865} spans={dashes} color="#55555a" />
      <VLine x={604.5} spans={[[195, 227], [260, 310], [712, 840], [872, 904], [938, 1038]]} color="#666" />
      <VLine x={1417.5} spans={[[184, 195], [227, 260], [292, 310], [744, 897]]} color="#666" />
    </g>
    <path d="M604.500 357.500V310.500L808.500 193H1214.500L1417.500 310.500V357.500Z" fill="#038003" stroke="#0b1f0b" />
    <path d="M604.500 310.500H1417.500" stroke="#0b2f0b" />
    <path d="M604.500 357.500H1417.500V712.500H604.500Z" fill="#808080" stroke="#222" />
    {[660, 844, 1045, 1238].map((x) => (
      <WindowUnit key={x} x={x} />
    ))}
    <VLine
      x={1011.5}
      spans={[[200, 329], [361, 393], [426, 555], [587, 619], [651, 780], [813, 845], [877, 1038]]}
      color="#111"
    />

    <LevelHead y={357} name="Level 2" value="4000" />
    <LevelHead y={712} name="Ground level" value="500" />
    <LevelHead y={865} name="Basement" value="-1000" />

    <path d="M357 633.500H534L604 712M388.500 604V664" fill="none" stroke="#222" />
    <Target x={388} y={633} r={20} color="#000" />
    <path d="M605 712L581 693L589 686Z" />
    <text x={424} y={608} fontSize={33}>500</text>

    <g fill="none" stroke={MARK}>
      <path d="M604.500 712V755" stroke="#7f86dd" strokeWidth="2" />
      <path d="M605.500 697L602.500 712.500H608.500ZM605.500 700V718" />
      <path d="M605 754L595 769.500H615.500Z" stroke="#4a7bd0" strokeWidth="2" />
      <path d="M601 763.500H609M605.500 759V767" stroke="#4a7bd0" />
      <path d="M613 763.500H652" stroke="#9cc7a0" />
      <path d="M651 763.500H671M671 763.500L656 760V767Z" stroke="#2f62cc" />
      <path d="M576 731V741L579.500 744L583 741V731Z" strokeWidth="2" />
      <path d="M578.500 733V737H581V733" />
      <path d="M573 743L586 731" stroke="#d048b0" strokeDasharray="3 1" />
    </g>
    <g fontSize={13} fill="#1546c8">
      <text x={661} y={699}>Survey Point - Default Site</text>
      <text x={661} y={715} fill="#505050">Shared Site:</text>
      {noteLines.map((t, i) => (
        <text key={t} x={661} y={730 + i * 16}>{t}</text>
      ))}
    </g>
    <path d={CURSOR} transform="translate(749.500 838.500)" fill="#fff" stroke="#444" />
  </Drawing>
);

/* ---------- page ---------- */

const Tools = ({ items }: { items: string[] }) => (
  <>
    {items.map((n, i) =>
      n === "|" ? (
        <Sep key={i} />
      ) : n === "v" ? (
        <Slot key={i} $w={12} aria-label="More">
          <Ico n="caret" s={12} />
        </Slot>
      ) : (
        <Slot key={i} aria-label={n}>
          <Ico n={n} />
        </Slot>
      )
    )}
  </>
);

const SmallCells = ({ items }: { items: string[] }) => (
  <>
    {items.map((n, i) =>
      n === "" ? (
        <span key={i} />
      ) : (
        <Cell key={i} aria-label={n}>
          <Ico n={n} s={n === "caret" ? 13 : 16} />
        </Cell>
      )
    )}
  </>
);

const BigCells = ({ items }: { items: string[] }) => (
  <>
    {items.map((n) => (
      <Cell key={n} aria-label={n}>
        <Big n={n} />
      </Cell>
    ))}
  </>
);

export default function App() {
  return (
    <Shell>
      <Global />
      <TitleBar>
        <ToolRow>
          <Tools items={["revit", "list"]} />
          <Gap $w={3} />
          <Tools
            items={[
              "open", "save", "sync", "v", "undo", "v", "redo", "v", "print", "|",
              "measure", "v", "dim", "tag", "textA", "|",
              "house", "v", "section", "thin", "|", "closeHidden", "switchWin", "v",
            ]}
          />
          <Slot $w={14} aria-label="Customize">
            <Ico n="custom" s={13} />
          </Slot>
        </ToolRow>
        <Title>Autodesk Revit 2022 - TGM Project.rvt - Elevation: East</Title>
        <ToolRow>
          <Slot $w={12} aria-label="Collapse"><Ico n="caretL" s={14} /></Slot>
          <Slot aria-label="Search"><Ico n="binoc" /></Slot>
          <Slot aria-label="Account"><Ico n="user" /></Slot>
          <Gap $w={2} />
          <UserName>bent_dalux</UserName>
          <Slot $w={12} aria-label="Account menu"><Ico n="caret" s={12} /></Slot>
          <Gap $w={4} />
          <Slot aria-label="Store"><Ico n="cart" /></Slot>
          <Gap $w={4} />
          <Sep />
          <Slot aria-label="Help"><Ico n="help" /></Slot>
          <Slot $w={12} aria-label="Help menu"><Ico n="caret" s={12} /></Slot>
          <Gap $w={50} />
          <Slot aria-label="Minimize"><Ico n="min" s={15} /></Slot>
          <Gap $w={2} />
          <Slot aria-label="Restore"><Ico n="restore" s={15} /></Slot>
          <Gap $w={2} />
          <Slot aria-label="Close"><Ico n="close" s={15} /></Slot>
        </ToolRow>
      </TitleBar>

      <TabRow>
        <RibbonTab $kind="file">File</RibbonTab>
        {tabs.map((t) => (
          <RibbonTab key={t}>{t}</RibbonTab>
        ))}
        <RibbonTab $kind="active">Modify | Survey Point</RibbonTab>
        <Gap $w={18} />
        <Slot $w={20} aria-label="Ribbon state"><Ico n="panelMode" s={14} /></Slot>
        <Slot $w={12} aria-label="Ribbon state menu"><Ico n="caret" s={12} /></Slot>
      </TabRow>

      <Ribbon>
        <Panel $w={54}>
          <PanelBody $pad={6}>
            <ModifyButton>
              <Big n="arrow" />
              Modify
            </ModifyButton>
          </PanelBody>
          <PanelName>
            Select <Ico n="tri" s={10} />
          </PanelName>
        </Panel>
        <Panel $w={60}>
          <PanelBody $pad={0}>
            <Stack>
              <Cell aria-label="Type properties"><Big n="typeProps" s={32} /></Cell>
              <Pressed aria-label="Properties palette"><Big n="props" /></Pressed>
            </Stack>
          </PanelBody>
          <PanelName>Properties</PanelName>
        </Panel>
        <Panel $w={74}>
          <PanelBody>
            <PasteButton>
              <Big n="paste" />
              Paste
              <Ico n="triGrey" s={10} />
            </PasteButton>
            <SmallGrid $cols="24px">
              <SmallCells items={["scissors", "copyDoc", "matchType"]} />
            </SmallGrid>
          </PanelBody>
          <PanelName>Clipboard</PanelName>
        </Panel>
        <Panel $w={130}>
          <PanelBody $pad={4}>
            <SmallGrid $cols="63px 24px 23px 12px">
              <TextCell><Ico n="cope" /> Cope <Ico n="caret" s={13} /></TextCell>
              <SmallCells items={["wallJoin", "splitFace", ""]} />
              <TextCell><Ico n="cut" /> Cut <Ico n="caret" s={13} /></TextCell>
              <SmallCells items={["beamJoin", "linkJoin", "caret"]} />
              <TextCell><Ico n="join" /> Join <Ico n="caret" s={13} /></TextCell>
              <SmallCells items={["paintJoin", "hammer", ""]} />
            </SmallGrid>
          </PanelBody>
          <PanelName>Geometry</PanelName>
        </Panel>
        <Panel $w={224}>
          <PanelBody $pad={0}>
            <BigGrid $cols={4} $cell={37}>
              <BigCells items={["align", "offset", "mirrorPick", "mirrorDraw", "move", "copy", "rotate", "trim"]} />
            </BigGrid>
            <Gap $w={2} />
            <SmallGrid $cols="23px 23px 23px">
              <SmallCells items={["splitEl", "splitGap", "unpin", "array", "scale", "pin", "trim1", "trim2", "del"]} />
            </SmallGrid>
          </PanelBody>
          <PanelName>Modify</PanelName>
        </Panel>
        <Panel $w={61}>
          <PanelBody>
            <SmallGrid $cols="22px 10px 24px">
              <SmallCells items={["bulb", "caret", "displace", "brush", "caret", "lineWork", "box3d"]} />
            </SmallGrid>
          </PanelBody>
          <PanelName>View</PanelName>
        </Panel>
        <Panel $w={52}>
          <PanelBody $pad={4}>
            <BigGrid $cols={1} $cell={30}>
              <BigCells items={["ruler", "dimBig"]} />
            </BigGrid>
            <BigGrid $cols={1} $cell={16}>
              <Cell aria-label="Measure menu"><Ico n="caret" s={13} /></Cell>
              <Cell aria-label="Dimension menu"><Ico n="caret" s={13} /></Cell>
            </BigGrid>
          </PanelBody>
          <PanelName>Measure</PanelName>
        </Panel>
        <Panel $w={77}>
          <PanelBody>
            <BigGrid $cols={2} $cell={36}>
              <BigCells items={["group", "assembly", "parts", "similar"]} />
            </BigGrid>
          </PanelBody>
          <PanelName>Create</PanelName>
        </Panel>
      </Ribbon>

      <OptionsBar>Modify | Survey Point</OptionsBar>

      <Body>
        <Side>
          <SideHead>
            Properties
            <Slot $w={16} aria-label="Close properties"><Ico n="close" s={15} /></Slot>
          </SideHead>
          <TypePicker aria-label="Type">
            <Thumb>
              <Svg width="34" height="42" viewBox="0 0 34 42">
                <path d="M1 1h15c9 0 13 4 13 11 0 6-3 9-7 11l11 18H22L14 26h-3v13l-10 2z" fill="#9b9b9b" />
                <path d="M10 8v10h5c4 0 5-2 5-5s-2-5-5-5z" fill="#efefef" />
                <path d="M1 18l10 7v14l-10 2z" fill="#858585" />
              </Svg>
            </Thumb>
            <Ico n="triGrey" s={13} />
          </TypePicker>
          <InstanceRow>
            <Combo $w={130} $h={21}>
              <select aria-label="Instance">
                <option>Survey Point (1)</option>
              </select>
              <Ico n="chev" s={14} />
            </Combo>
            <EditType>
              <Ico n="editType" s={14} /> Edit Type
            </EditType>
          </InstanceRow>
          <PropArea>
            <PropTable>
              <colgroup>
                <NameCol />
                <col />
                <EndCol />
              </colgroup>
              <tbody>
                <PropGroup name="Identity Data" />
                <PropRow name="N/S" value="0.0" focus />
                <PropRow name="E/W" value="0.0" />
                <PropRow name="Elev" value="0.0" />
                <PropGroup name="Geolocation" />
                <PropRow name="Lat" value="" off />
                <PropRow name="Lon" value="" off />
              </tbody>
            </PropTable>
          </PropArea>
          <SideFoot>
            <a href="#help">Properties help</a>
            <Apply>Apply</Apply>
          </SideFoot>
          <SideHead>
            Project Browser - TGM Project.rvt
            <Slot $w={16} aria-label="Close browser"><Ico n="close" s={15} /></Slot>
          </SideHead>
          <Tree>
            {tree.map((node, i) => (
              <TreeItem key={i} node={node} />
            ))}
          </Tree>
        </Side>

        <Main>
          <DocTabs>
            <DocTab>
              <Ico n="docTab" s={15} />
              <span>Ground level</span>
            </DocTab>
            <DocTab $on>
              <Ico n="elevTab" s={15} />
              <span>East</span>
              <Ico n="close" s={15} />
            </DocTab>
            <Spacer />
            <Ico n="custom" s={14} />
          </DocTabs>
          <ViewRow>
            <Canvas>
              <Elevation />
              <NavBar>
                <Dot aria-label="Close bar" />
                <NavButton aria-label="Wheel"><Ico n="wheel" s={17} /><b>2D</b></NavButton>
                <Ico n="triGrey" s={8} />
                <hr />
                <NavButton aria-label="Zoom"><Ico n="zoomRegion" s={13} /></NavButton>
                <Ico n="triGrey" s={8} />
                <Dot aria-label="Bar options" />
              </NavBar>
            </Canvas>
            <VScroll>
              <VThumb />
            </VScroll>
          </ViewRow>
          <ViewBar>
            <ScaleButton>1 : 100</ScaleButton>
            <ViewTools>
              {[
                "detail", "visual", "sunOff", "shadowOff", "cropOff", "cropShow",
                "glasses", "reveal", "tempView", "analytic", "constraint",
              ].map((n) => (
                <button key={n} aria-label={n}>
                  <Ico n={n} s={15} />
                </button>
              ))}
            </ViewTools>
            <HScroll>
              <HThumb />
            </HScroll>
          </ViewBar>
        </Main>
      </Body>

      <StatusBar>
        <Hint>Click to select, TAB for alternates, CTRL adds, SHIFT unselects.</Hint>
        <Slot aria-label="Worksets"><Ico n="worksets" /></Slot>
        <Gap $w={2} />
        <Combo $w={190} $h={17}>
          <select aria-label="Active workset">
            <option></option>
          </select>
          <Ico n="chev" s={12} />
        </Combo>
        <Gap $w={2} />
        <Slot aria-label="Editing requests"><Ico n="editable" /></Slot>
        <Count $w={26}>:0</Count>
        <Slot aria-label="Design options"><Ico n="options" /></Slot>
        <Slot aria-label="Add to set"><Ico n="optionAdd" /></Slot>
        <Gap $w={2} />
        <Muted>
          <Combo $w={191} $h={17}>
            <select aria-label="Design option">
              <option>Main Model</option>
            </select>
            <Ico n="chev" s={12} />
          </Combo>
        </Muted>
        <Gap $w={207} />
        <Tools items={["selLinks", "selUnder", "selPinned", "selFace", "drag", "gear", "filter"]} />
        <Count $w={64}>:1</Count>
      </StatusBar>
    </Shell>
  );
}
